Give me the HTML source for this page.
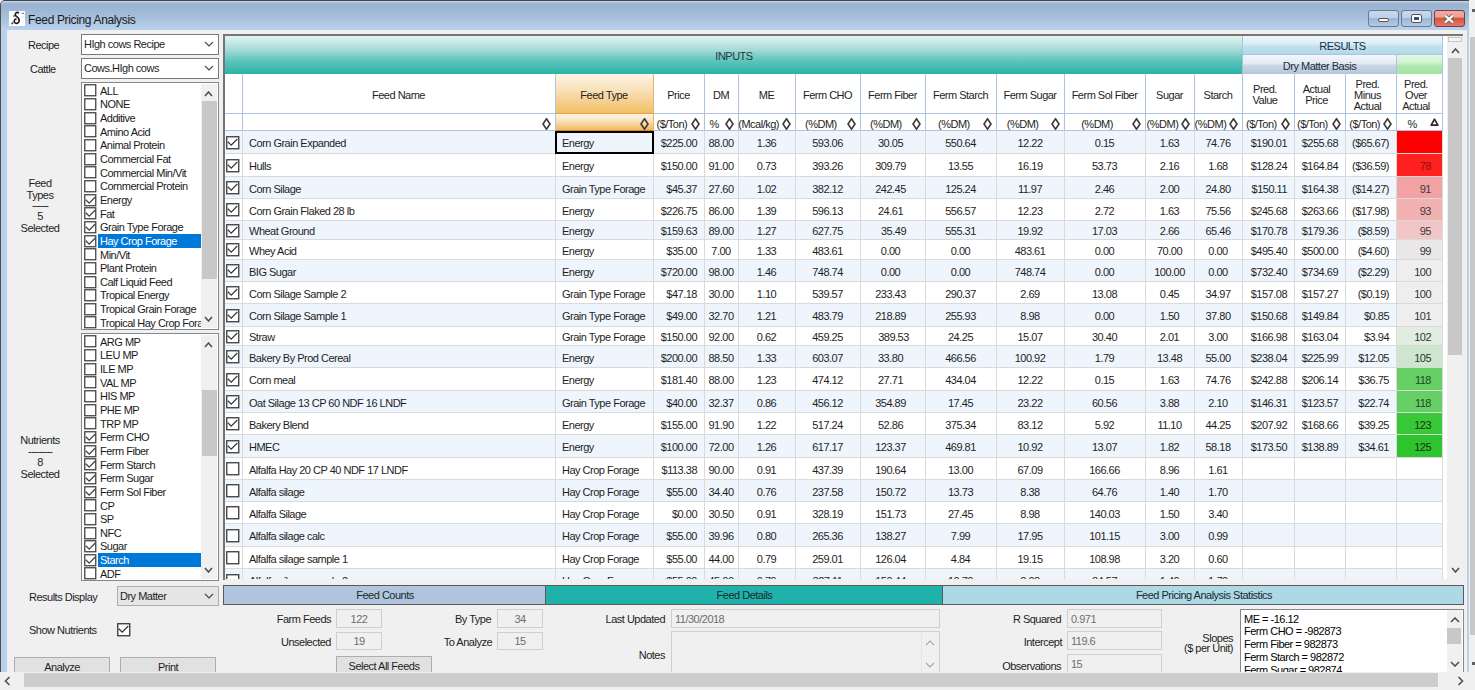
<!DOCTYPE html>
<html><head><meta charset="utf-8"><style>
html,body{margin:0;padding:0;width:1475px;height:690px;overflow:hidden;background:#f0f0f0;position:relative;font-family:"Liberation Sans", sans-serif}
.t{position:absolute;font-family:"Liberation Sans", sans-serif;font-size:11px;letter-spacing:-0.5px;line-height:14px;white-space:nowrap;color:#1e1e1e}
</style></head><body>
<div style="position:absolute;left:1469px;top:0px;width:6px;height:690px;background:#f0f0f0"></div><div style="position:absolute;left:1470px;top:37px;width:5px;height:598px;background:#c8c8c8"></div><div style="position:absolute;left:1472px;top:9px;width:3px;height:3px;background:#606060"></div><div style="position:absolute;left:1472px;top:662px;width:3px;height:3px;background:#606060"></div><div style="position:absolute;left:0px;top:0px;width:1469px;height:672px;background:#b9d1ea;border-top:1px solid #474747;border-left:1px solid #505050;box-sizing:border-box;border-top-left-radius:5px"></div><div style="position:absolute;left:1px;top:1px;width:1468px;height:29px;background:linear-gradient(#c6d6ea 0px,#98b2d1 3px,#a3bcda 14px,#bad2ed 29px);border-top-left-radius:4px"></div><div style="position:absolute;left:1467px;top:30px;width:2px;height:642px;background:#b9d1ea"></div><div style="position:absolute;left:9px;top:10.5px;width:16px;height:15.5px;background:#fff"><svg width="16" height="16" style="position:absolute;left:0;top:0"><path d="M10 2.2 C7.5 0.2,4.8 3.2,7.2 5.2 C9.8 7,11.2 8.8,9.6 11.2 C8 13.2,5.2 12.6,5.2 10 C5.2 8.8,6.2 8,7.5 8.2" fill="none" stroke="#1a1a1a" stroke-width="1.6"/><path d="M4.2 5.2 L6.2 4.6" stroke="#333" stroke-width="1.2"/><path d="M2.4 13.2 L4.3 11.4" stroke="#2a6a6a" stroke-width="1.6"/><path d="M12.8 1.5 L13.6 3.2 M14.4 1.8 L14.6 3" stroke="#4a7a8a" stroke-width="0.9"/></svg></div><div class="t" style="left:28px;top:11.5px;font-size:12px;letter-spacing:-0.35px;color:#1a1a1a;line-height:16px">Feed Pricing Analysis</div><div style="position:absolute;left:1368px;top:10px;width:31px;height:17px;box-sizing:border-box;border:1px solid #6b7a90;border-radius:3px;background:linear-gradient(#c8daf0 0%,#bcd0ea 45%,#9cb6d4 50%,#b4cae4 100%)"><div style="position:absolute;left:9px;top:7px;width:11px;height:4px;background:#fff;border:1px solid #555;border-radius:2px;box-sizing:border-box"></div></div><div style="position:absolute;left:1401px;top:10px;width:31px;height:17px;box-sizing:border-box;border:1px solid #6b7a90;border-radius:3px;background:linear-gradient(#c8daf0 0%,#bcd0ea 45%,#9cb6d4 50%,#b4cae4 100%)"><div style="position:absolute;left:9px;top:3px;width:11px;height:9px;background:#fff;border:1px solid #555;border-radius:2px;box-sizing:border-box"><div style="position:absolute;left:2px;top:2px;width:5px;height:3px;background:#3a4a70"></div></div></div><div style="position:absolute;left:1434px;top:10px;width:31px;height:17px;box-sizing:border-box;border:1px solid #6e4040;border-radius:3px;background:linear-gradient(#f6aaa6 0%,#f09c96 40%,#c8602c 50%,#c8602c 56%,#e05a4c 60%,#e87468 100%)"><svg style="position:absolute;left:7px;top:2px" width="14" height="12"><path d="M3 2.5 L11 9.5 M11 2.5 L3 9.5" stroke="#666" stroke-width="3.8"/><path d="M3 2.5 L11 9.5 M11 2.5 L3 9.5" stroke="#fff" stroke-width="2.2"/></svg></div><div style="position:absolute;left:7px;top:30px;width:1460px;height:642px;background:#f0f0f0"></div><div class="t" style="left:28px;top:38px;">Recipe</div><div class="t" style="left:30px;top:62px;">Cattle</div><div style="position:absolute;left:81px;top:34px;width:138px;height:21px;box-sizing:border-box;border:1px solid #7a7a7a;background:#fff"><div class="t" style="left:2px;top:2px">HIgh cows Recipe</div><svg style="position:absolute;left:122px;top:6px" width="10" height="6"><path d="M1 1 L5.0 5 L9 1" fill="none" stroke="#444" stroke-width="1.1"/></svg></div><div style="position:absolute;left:81px;top:58px;width:138px;height:21px;box-sizing:border-box;border:1px solid #7a7a7a;background:#fff"><div class="t" style="left:2px;top:2px">Cows.HIgh cows</div><svg style="position:absolute;left:122px;top:6px" width="10" height="6"><path d="M1 1 L5.0 5 L9 1" fill="none" stroke="#444" stroke-width="1.1"/></svg></div><div style="position:absolute;left:81px;top:82px;width:138px;height:248px;box-sizing:border-box;border:1px solid #828790;background:#fff;overflow:hidden"><svg style="position:absolute;left:2px;top:1.4px" width="13" height="13"><rect x="0.75" y="0.75" width="11" height="11" fill="#fff" stroke="#444" stroke-width="1.3"/></svg><div class="t" style="left:18px;top:0.70px;color:#1a1a1a;width:101px;overflow:hidden">ALL</div><svg style="position:absolute;left:2px;top:15.05px" width="13" height="13"><rect x="0.75" y="0.75" width="11" height="11" fill="#fff" stroke="#444" stroke-width="1.3"/></svg><div class="t" style="left:18px;top:14.35px;color:#1a1a1a;width:101px;overflow:hidden">NONE</div><svg style="position:absolute;left:2px;top:28.7px" width="13" height="13"><rect x="0.75" y="0.75" width="11" height="11" fill="#fff" stroke="#444" stroke-width="1.3"/></svg><div class="t" style="left:18px;top:28.00px;color:#1a1a1a;width:101px;overflow:hidden">Additive</div><svg style="position:absolute;left:2px;top:42.35px" width="13" height="13"><rect x="0.75" y="0.75" width="11" height="11" fill="#fff" stroke="#444" stroke-width="1.3"/></svg><div class="t" style="left:18px;top:41.65px;color:#1a1a1a;width:101px;overflow:hidden">Amino Acid</div><svg style="position:absolute;left:2px;top:56.0px" width="13" height="13"><rect x="0.75" y="0.75" width="11" height="11" fill="#fff" stroke="#444" stroke-width="1.3"/></svg><div class="t" style="left:18px;top:55.30px;color:#1a1a1a;width:101px;overflow:hidden">Animal Protein</div><svg style="position:absolute;left:2px;top:69.65px" width="13" height="13"><rect x="0.75" y="0.75" width="11" height="11" fill="#fff" stroke="#444" stroke-width="1.3"/></svg><div class="t" style="left:18px;top:68.95px;color:#1a1a1a;width:101px;overflow:hidden">Commercial Fat</div><svg style="position:absolute;left:2px;top:83.30000000000001px" width="13" height="13"><rect x="0.75" y="0.75" width="11" height="11" fill="#fff" stroke="#444" stroke-width="1.3"/></svg><div class="t" style="left:18px;top:82.60px;color:#1a1a1a;width:101px;overflow:hidden">Commercial Min/Vit</div><svg style="position:absolute;left:2px;top:96.95px" width="13" height="13"><rect x="0.75" y="0.75" width="11" height="11" fill="#fff" stroke="#444" stroke-width="1.3"/></svg><div class="t" style="left:18px;top:96.25px;color:#1a1a1a;width:101px;overflow:hidden">Commercial Protein</div><svg style="position:absolute;left:2px;top:110.60000000000001px" width="13" height="13"><rect x="0.75" y="0.75" width="11" height="11" fill="#fff" stroke="#444" stroke-width="1.3"/><path d="M1.8 5.8 L5.2 9.2 L11.3 3" fill="none" stroke="#444" stroke-width="1.3"/></svg><div class="t" style="left:18px;top:109.90px;color:#1a1a1a;width:101px;overflow:hidden">Energy</div><svg style="position:absolute;left:2px;top:124.25000000000001px" width="13" height="13"><rect x="0.75" y="0.75" width="11" height="11" fill="#fff" stroke="#444" stroke-width="1.3"/><path d="M1.8 5.8 L5.2 9.2 L11.3 3" fill="none" stroke="#444" stroke-width="1.3"/></svg><div class="t" style="left:18px;top:123.55px;color:#1a1a1a;width:101px;overflow:hidden">Fat</div><svg style="position:absolute;left:2px;top:137.9px" width="13" height="13"><rect x="0.75" y="0.75" width="11" height="11" fill="#fff" stroke="#444" stroke-width="1.3"/><path d="M1.8 5.8 L5.2 9.2 L11.3 3" fill="none" stroke="#444" stroke-width="1.3"/></svg><div class="t" style="left:18px;top:137.20px;color:#1a1a1a;width:101px;overflow:hidden">Grain Type Forage</div><div style="position:absolute;left:16px;top:150.75px;width:103px;height:14px;background:#0078d7"></div><svg style="position:absolute;left:2px;top:151.55px" width="13" height="13"><rect x="0.75" y="0.75" width="11" height="11" fill="#fff" stroke="#444" stroke-width="1.3"/><path d="M1.8 5.8 L5.2 9.2 L11.3 3" fill="none" stroke="#444" stroke-width="1.3"/></svg><div class="t" style="left:18px;top:150.85px;color:#fff;width:101px;overflow:hidden">Hay Crop Forage</div><svg style="position:absolute;left:2px;top:165.20000000000002px" width="13" height="13"><rect x="0.75" y="0.75" width="11" height="11" fill="#fff" stroke="#444" stroke-width="1.3"/></svg><div class="t" style="left:18px;top:164.50px;color:#1a1a1a;width:101px;overflow:hidden">Min/Vit</div><svg style="position:absolute;left:2px;top:178.85000000000002px" width="13" height="13"><rect x="0.75" y="0.75" width="11" height="11" fill="#fff" stroke="#444" stroke-width="1.3"/></svg><div class="t" style="left:18px;top:178.15px;color:#1a1a1a;width:101px;overflow:hidden">Plant Protein</div><svg style="position:absolute;left:2px;top:192.5px" width="13" height="13"><rect x="0.75" y="0.75" width="11" height="11" fill="#fff" stroke="#444" stroke-width="1.3"/></svg><div class="t" style="left:18px;top:191.80px;color:#1a1a1a;width:101px;overflow:hidden">Calf Liquid Feed</div><svg style="position:absolute;left:2px;top:206.15px" width="13" height="13"><rect x="0.75" y="0.75" width="11" height="11" fill="#fff" stroke="#444" stroke-width="1.3"/></svg><div class="t" style="left:18px;top:205.45px;color:#1a1a1a;width:101px;overflow:hidden">Tropical Energy</div><svg style="position:absolute;left:2px;top:219.8px" width="13" height="13"><rect x="0.75" y="0.75" width="11" height="11" fill="#fff" stroke="#444" stroke-width="1.3"/></svg><div class="t" style="left:18px;top:219.10px;color:#1a1a1a;width:101px;overflow:hidden">Tropical Grain Forage</div><svg style="position:absolute;left:2px;top:233.45000000000002px" width="13" height="13"><rect x="0.75" y="0.75" width="11" height="11" fill="#fff" stroke="#444" stroke-width="1.3"/></svg><div class="t" style="left:18px;top:232.75px;color:#1a1a1a;width:101px;overflow:hidden">Tropical Hay Crop Forage</div><div style="position:absolute;left:119px;top:1px;width:16px;height:244px;background:#f0f0f0"></div><svg style="position:absolute;left:122px;top:7.5px" width="9" height="6"><path d="M1 5 L4.5 1 L8 5" fill="none" stroke="#505050" stroke-width="1.6"/></svg><svg style="position:absolute;left:122px;top:233px" width="9" height="6"><path d="M1 1 L4.5 5 L8 1" fill="none" stroke="#505050" stroke-width="1.6"/></svg><div style="position:absolute;left:120px;top:18px;width:15px;height:178px;background:#c8c8c8"></div></div><div style="position:absolute;left:81px;top:333px;width:138px;height:248px;box-sizing:border-box;border:1px solid #828790;background:#fff;overflow:hidden"><svg style="position:absolute;left:2px;top:1.4px" width="13" height="13"><rect x="0.75" y="0.75" width="11" height="11" fill="#fff" stroke="#444" stroke-width="1.3"/></svg><div class="t" style="left:18px;top:0.70px;color:#1a1a1a;width:101px;overflow:hidden">ARG MP</div><svg style="position:absolute;left:2px;top:15.05px" width="13" height="13"><rect x="0.75" y="0.75" width="11" height="11" fill="#fff" stroke="#444" stroke-width="1.3"/></svg><div class="t" style="left:18px;top:14.35px;color:#1a1a1a;width:101px;overflow:hidden">LEU MP</div><svg style="position:absolute;left:2px;top:28.7px" width="13" height="13"><rect x="0.75" y="0.75" width="11" height="11" fill="#fff" stroke="#444" stroke-width="1.3"/></svg><div class="t" style="left:18px;top:28.00px;color:#1a1a1a;width:101px;overflow:hidden">ILE MP</div><svg style="position:absolute;left:2px;top:42.35px" width="13" height="13"><rect x="0.75" y="0.75" width="11" height="11" fill="#fff" stroke="#444" stroke-width="1.3"/></svg><div class="t" style="left:18px;top:41.65px;color:#1a1a1a;width:101px;overflow:hidden">VAL MP</div><svg style="position:absolute;left:2px;top:56.0px" width="13" height="13"><rect x="0.75" y="0.75" width="11" height="11" fill="#fff" stroke="#444" stroke-width="1.3"/></svg><div class="t" style="left:18px;top:55.30px;color:#1a1a1a;width:101px;overflow:hidden">HIS MP</div><svg style="position:absolute;left:2px;top:69.65px" width="13" height="13"><rect x="0.75" y="0.75" width="11" height="11" fill="#fff" stroke="#444" stroke-width="1.3"/></svg><div class="t" style="left:18px;top:68.95px;color:#1a1a1a;width:101px;overflow:hidden">PHE MP</div><svg style="position:absolute;left:2px;top:83.30000000000001px" width="13" height="13"><rect x="0.75" y="0.75" width="11" height="11" fill="#fff" stroke="#444" stroke-width="1.3"/></svg><div class="t" style="left:18px;top:82.60px;color:#1a1a1a;width:101px;overflow:hidden">TRP MP</div><svg style="position:absolute;left:2px;top:96.95px" width="13" height="13"><rect x="0.75" y="0.75" width="11" height="11" fill="#fff" stroke="#444" stroke-width="1.3"/><path d="M1.8 5.8 L5.2 9.2 L11.3 3" fill="none" stroke="#444" stroke-width="1.3"/></svg><div class="t" style="left:18px;top:96.25px;color:#1a1a1a;width:101px;overflow:hidden">Ferm CHO</div><svg style="position:absolute;left:2px;top:110.60000000000001px" width="13" height="13"><rect x="0.75" y="0.75" width="11" height="11" fill="#fff" stroke="#444" stroke-width="1.3"/><path d="M1.8 5.8 L5.2 9.2 L11.3 3" fill="none" stroke="#444" stroke-width="1.3"/></svg><div class="t" style="left:18px;top:109.90px;color:#1a1a1a;width:101px;overflow:hidden">Ferm Fiber</div><svg style="position:absolute;left:2px;top:124.25000000000001px" width="13" height="13"><rect x="0.75" y="0.75" width="11" height="11" fill="#fff" stroke="#444" stroke-width="1.3"/><path d="M1.8 5.8 L5.2 9.2 L11.3 3" fill="none" stroke="#444" stroke-width="1.3"/></svg><div class="t" style="left:18px;top:123.55px;color:#1a1a1a;width:101px;overflow:hidden">Ferm Starch</div><svg style="position:absolute;left:2px;top:137.9px" width="13" height="13"><rect x="0.75" y="0.75" width="11" height="11" fill="#fff" stroke="#444" stroke-width="1.3"/><path d="M1.8 5.8 L5.2 9.2 L11.3 3" fill="none" stroke="#444" stroke-width="1.3"/></svg><div class="t" style="left:18px;top:137.20px;color:#1a1a1a;width:101px;overflow:hidden">Ferm Sugar</div><svg style="position:absolute;left:2px;top:151.55px" width="13" height="13"><rect x="0.75" y="0.75" width="11" height="11" fill="#fff" stroke="#444" stroke-width="1.3"/><path d="M1.8 5.8 L5.2 9.2 L11.3 3" fill="none" stroke="#444" stroke-width="1.3"/></svg><div class="t" style="left:18px;top:150.85px;color:#1a1a1a;width:101px;overflow:hidden">Ferm Sol Fiber</div><svg style="position:absolute;left:2px;top:165.20000000000002px" width="13" height="13"><rect x="0.75" y="0.75" width="11" height="11" fill="#fff" stroke="#444" stroke-width="1.3"/></svg><div class="t" style="left:18px;top:164.50px;color:#1a1a1a;width:101px;overflow:hidden">CP</div><svg style="position:absolute;left:2px;top:178.85000000000002px" width="13" height="13"><rect x="0.75" y="0.75" width="11" height="11" fill="#fff" stroke="#444" stroke-width="1.3"/></svg><div class="t" style="left:18px;top:178.15px;color:#1a1a1a;width:101px;overflow:hidden">SP</div><svg style="position:absolute;left:2px;top:192.5px" width="13" height="13"><rect x="0.75" y="0.75" width="11" height="11" fill="#fff" stroke="#444" stroke-width="1.3"/></svg><div class="t" style="left:18px;top:191.80px;color:#1a1a1a;width:101px;overflow:hidden">NFC</div><svg style="position:absolute;left:2px;top:206.15px" width="13" height="13"><rect x="0.75" y="0.75" width="11" height="11" fill="#fff" stroke="#444" stroke-width="1.3"/><path d="M1.8 5.8 L5.2 9.2 L11.3 3" fill="none" stroke="#444" stroke-width="1.3"/></svg><div class="t" style="left:18px;top:205.45px;color:#1a1a1a;width:101px;overflow:hidden">Sugar</div><div style="position:absolute;left:16px;top:219.00px;width:103px;height:14px;background:#0078d7"></div><svg style="position:absolute;left:2px;top:219.8px" width="13" height="13"><rect x="0.75" y="0.75" width="11" height="11" fill="#fff" stroke="#444" stroke-width="1.3"/><path d="M1.8 5.8 L5.2 9.2 L11.3 3" fill="none" stroke="#444" stroke-width="1.3"/></svg><div class="t" style="left:18px;top:219.10px;color:#fff;width:101px;overflow:hidden">Starch</div><svg style="position:absolute;left:2px;top:233.45000000000002px" width="13" height="13"><rect x="0.75" y="0.75" width="11" height="11" fill="#fff" stroke="#444" stroke-width="1.3"/></svg><div class="t" style="left:18px;top:232.75px;color:#1a1a1a;width:101px;overflow:hidden">ADF</div><div style="position:absolute;left:119px;top:1px;width:16px;height:244px;background:#f0f0f0"></div><svg style="position:absolute;left:122px;top:7.5px" width="9" height="6"><path d="M1 5 L4.5 1 L8 5" fill="none" stroke="#505050" stroke-width="1.6"/></svg><svg style="position:absolute;left:122px;top:233px" width="9" height="6"><path d="M1 1 L4.5 5 L8 1" fill="none" stroke="#505050" stroke-width="1.6"/></svg><div style="position:absolute;left:120px;top:56px;width:15px;height:66px;background:#c8c8c8"></div></div><div class="t" style="left:-10px;top:176px;width:100px;text-align:center;">Feed</div><div class="t" style="left:-10px;top:188px;width:100px;text-align:center;">Types</div><div class="t" style="left:-10px;top:198px;width:100px;text-align:center;letter-spacing:-1px">------</div><div class="t" style="left:-10px;top:209px;width:100px;text-align:center;">5</div><div class="t" style="left:-10px;top:221px;width:100px;text-align:center;">Selected</div><div class="t" style="left:-10px;top:433px;width:100px;text-align:center;">Nutrients</div><div class="t" style="left:-10px;top:444px;width:100px;text-align:center;letter-spacing:-1px">---------</div><div class="t" style="left:-10px;top:455px;width:100px;text-align:center;">8</div><div class="t" style="left:-10px;top:467px;width:100px;text-align:center;">Selected</div><div class="t" style="left:29px;top:589.5px;">Results Display</div><div style="position:absolute;left:117px;top:586px;width:102px;height:20px;box-sizing:border-box;border:1px solid #adadad;background:#e5e5e5"><div class="t" style="left:2px;top:2px">Dry Matter</div><svg style="position:absolute;left:86px;top:6px" width="10" height="6"><path d="M1 1 L5.0 5 L9 1" fill="none" stroke="#444" stroke-width="1.1"/></svg></div><div class="t" style="left:29px;top:622.5px;">Show Nutrients</div><svg style="position:absolute;left:117px;top:623px" width="14" height="14"><rect x="0.75" y="0.75" width="12" height="12" fill="#fff" stroke="#333" stroke-width="1.3"/><path d="M1.8 5.8 L5.2 9.2 L11.3 3" fill="none" stroke="#333" stroke-width="1.3"/></svg><div style="position:absolute;left:14px;top:657px;width:96px;height:20px;box-sizing:border-box;border:1px solid #adadad;background:#e1e1e1"><div class="t" style="left:0;top:2px;width:94px;text-align:center">Analyze</div></div><div style="position:absolute;left:120px;top:657px;width:96px;height:20px;box-sizing:border-box;border:1px solid #adadad;background:#e1e1e1"><div class="t" style="left:0;top:2px;width:94px;text-align:center">Print</div></div>
<div style="position:absolute;left:223px;top:34px;width:1240px;height:2px;background:#7a7676"></div><div style="position:absolute;left:223px;top:34px;width:2px;height:546px;background:#747474"></div><div style="position:absolute;left:225px;top:36px;width:1238px;height:544px;background:#fff"></div><div style="position:absolute;left:225px;top:36px;width:1018px;height:38px;background:linear-gradient(#e2f5f4 0%,#a6dcd7 35%,#5ec4bc 65%,#2bb3a9 100%)"></div><div class="t" style="left:225px;top:49px;width:1018px;text-align:center;color:#1e3a3a">INPUTS</div><div style="position:absolute;left:1243px;top:36px;width:199px;height:19px;background:linear-gradient(#eef7fb 0%,#d8edf5 45%,#c2e1ee 55%,#b2d9e9 100%);border-bottom:1px solid #a9c6de;box-sizing:border-box"></div><div class="t" style="left:1243px;top:39.3px;width:199px;text-align:center;color:#1e2e40">RESULTS</div><div style="position:absolute;left:1243px;top:55px;width:153px;height:19px;background:linear-gradient(#f4f7fa 0%,#e3eaf2 45%,#cad6e5 55%,#b6c7dc 100%)"></div><div class="t" style="left:1243px;top:59px;width:153px;text-align:center;color:#1e2e40">Dry Matter Basis</div><div style="position:absolute;left:1396px;top:55px;width:1px;height:19px;background:#aec3de"></div><div style="position:absolute;left:1442px;top:36px;width:1px;height:38px;background:#aec3de"></div><div style="position:absolute;left:1242px;top:36px;width:1px;height:38px;background:#9cc8d0"></div><div style="position:absolute;left:1397px;top:55px;width:45px;height:19px;background:linear-gradient(#e2f8e2 0%,#d2f3d2 40%,#b2e9b2 55%,#a4e2a4 100%)"></div><div style="position:absolute;left:225px;top:113px;width:1217px;height:1px;background:#aec3de"></div><div style="position:absolute;left:225px;top:130px;width:1217px;height:1px;background:#aec3de"></div><div style="position:absolute;left:242px;top:74px;width:1px;height:57px;background:#aec3de"></div><div style="position:absolute;left:555px;top:74px;width:1px;height:57px;background:#aec3de"></div><div style="position:absolute;left:653px;top:74px;width:1px;height:57px;background:#f0b060"></div><div style="position:absolute;left:704px;top:74px;width:1px;height:57px;background:#aec3de"></div><div style="position:absolute;left:738px;top:74px;width:1px;height:57px;background:#aec3de"></div><div style="position:absolute;left:795px;top:74px;width:1px;height:57px;background:#aec3de"></div><div style="position:absolute;left:860px;top:74px;width:1px;height:57px;background:#aec3de"></div><div style="position:absolute;left:925px;top:74px;width:1px;height:57px;background:#aec3de"></div><div style="position:absolute;left:996px;top:74px;width:1px;height:57px;background:#aec3de"></div><div style="position:absolute;left:1064px;top:74px;width:1px;height:57px;background:#aec3de"></div><div style="position:absolute;left:1145px;top:74px;width:1px;height:57px;background:#aec3de"></div><div style="position:absolute;left:1194px;top:74px;width:1px;height:57px;background:#aec3de"></div><div style="position:absolute;left:1242px;top:74px;width:1px;height:57px;background:#aec3de"></div><div style="position:absolute;left:1294px;top:74px;width:1px;height:57px;background:#aec3de"></div><div style="position:absolute;left:1345px;top:74px;width:1px;height:57px;background:#aec3de"></div><div style="position:absolute;left:1396px;top:74px;width:1px;height:57px;background:#aec3de"></div><div style="position:absolute;left:1442px;top:74px;width:1px;height:57px;background:#aec3de"></div><div style="position:absolute;left:556px;top:74px;width:97px;height:40px;background:linear-gradient(#fdf4e6 0%,#fae4c0 35%,#f6d298 65%,#f2c062 100%);border-bottom:1px solid #eda04a;box-sizing:border-box"></div><div style="position:absolute;left:556px;top:114px;width:97px;height:17px;background:linear-gradient(#fef6ea 0%,#fae2b8 45%,#f5cc86 75%,#f2b95a 100%);border-bottom:1px solid #d9802a;box-sizing:border-box"></div><div class="t" style="left:242px;top:89.5px;width:313px;text-align:center;line-height:11px">Feed Name</div><div class="t" style="left:555px;top:89.5px;width:98px;text-align:center;line-height:11px">Feed Type</div><div class="t" style="left:653px;top:89.5px;width:51px;text-align:center;line-height:11px">Price</div><div class="t" style="left:704px;top:89.5px;width:34px;text-align:center;line-height:11px">DM</div><div class="t" style="left:738px;top:89.5px;width:57px;text-align:center;line-height:11px">ME</div><div class="t" style="left:795px;top:89.5px;width:65px;text-align:center;line-height:11px">Ferm CHO</div><div class="t" style="left:860px;top:89.5px;width:65px;text-align:center;line-height:11px">Ferm Fiber</div><div class="t" style="left:925px;top:89.5px;width:71px;text-align:center;line-height:11px">Ferm Starch</div><div class="t" style="left:996px;top:89.5px;width:68px;text-align:center;line-height:11px">Ferm Sugar</div><div class="t" style="left:1064px;top:89.5px;width:81px;text-align:center;line-height:11px">Ferm Sol Fiber</div><div class="t" style="left:1145px;top:89.5px;width:49px;text-align:center;line-height:11px">Sugar</div><div class="t" style="left:1194px;top:89.5px;width:48px;text-align:center;line-height:11px">Starch</div><div class="t" style="left:1239px;top:84.0px;width:52px;text-align:center;line-height:11px">Pred.<br>Value</div><div class="t" style="left:1291px;top:84.0px;width:51px;text-align:center;line-height:11px">Actual<br>Price</div><div class="t" style="left:1342px;top:78.5px;width:51px;text-align:center;line-height:11px">Pred.<br>Minus<br>Actual</div><div class="t" style="left:1393px;top:78.5px;width:46px;text-align:center;line-height:11px">Pred.<br>Over<br>Actual</div><svg style="position:absolute;left:542px;top:118px" width="9" height="12"><path d="M4.5 0.8 L8 6 L4.5 11.2 L1 6 Z" fill="none" stroke="#3a3a3a" stroke-width="1.6"/></svg><svg style="position:absolute;left:640px;top:118px" width="9" height="12"><path d="M4.5 0.8 L8 6 L4.5 11.2 L1 6 Z" fill="none" stroke="#3a3a3a" stroke-width="1.6"/></svg><svg style="position:absolute;left:691px;top:118px" width="9" height="12"><path d="M4.5 0.8 L8 6 L4.5 11.2 L1 6 Z" fill="none" stroke="#3a3a3a" stroke-width="1.6"/></svg><div class="t" style="left:656.5px;top:117px">($/Ton)</div><svg style="position:absolute;left:725px;top:118px" width="9" height="12"><path d="M4.5 0.8 L8 6 L4.5 11.2 L1 6 Z" fill="none" stroke="#3a3a3a" stroke-width="1.6"/></svg><div class="t" style="left:709.5px;top:117px">%</div><svg style="position:absolute;left:782px;top:118px" width="9" height="12"><path d="M4.5 0.8 L8 6 L4.5 11.2 L1 6 Z" fill="none" stroke="#3a3a3a" stroke-width="1.6"/></svg><div class="t" style="left:738.3px;top:117px">(Mcal/kg)</div><svg style="position:absolute;left:847px;top:118px" width="9" height="12"><path d="M4.5 0.8 L8 6 L4.5 11.2 L1 6 Z" fill="none" stroke="#3a3a3a" stroke-width="1.6"/></svg><div class="t" style="left:805px;top:117px">(%DM)</div><svg style="position:absolute;left:912px;top:118px" width="9" height="12"><path d="M4.5 0.8 L8 6 L4.5 11.2 L1 6 Z" fill="none" stroke="#3a3a3a" stroke-width="1.6"/></svg><div class="t" style="left:870px;top:117px">(%DM)</div><svg style="position:absolute;left:983px;top:118px" width="9" height="12"><path d="M4.5 0.8 L8 6 L4.5 11.2 L1 6 Z" fill="none" stroke="#3a3a3a" stroke-width="1.6"/></svg><div class="t" style="left:938px;top:117px">(%DM)</div><svg style="position:absolute;left:1051px;top:118px" width="9" height="12"><path d="M4.5 0.8 L8 6 L4.5 11.2 L1 6 Z" fill="none" stroke="#3a3a3a" stroke-width="1.6"/></svg><div class="t" style="left:1006.8px;top:117px">(%DM)</div><svg style="position:absolute;left:1132px;top:118px" width="9" height="12"><path d="M4.5 0.8 L8 6 L4.5 11.2 L1 6 Z" fill="none" stroke="#3a3a3a" stroke-width="1.6"/></svg><div class="t" style="left:1081.2px;top:117px">(%DM)</div><svg style="position:absolute;left:1181px;top:118px" width="9" height="12"><path d="M4.5 0.8 L8 6 L4.5 11.2 L1 6 Z" fill="none" stroke="#3a3a3a" stroke-width="1.6"/></svg><div class="t" style="left:1146.6px;top:117px">(%DM)</div><svg style="position:absolute;left:1229px;top:118px" width="9" height="12"><path d="M4.5 0.8 L8 6 L4.5 11.2 L1 6 Z" fill="none" stroke="#3a3a3a" stroke-width="1.6"/></svg><div class="t" style="left:1194.6px;top:117px">(%DM)</div><svg style="position:absolute;left:1281px;top:118px" width="9" height="12"><path d="M4.5 0.8 L8 6 L4.5 11.2 L1 6 Z" fill="none" stroke="#3a3a3a" stroke-width="1.6"/></svg><div class="t" style="left:1246px;top:117px">($/Ton)</div><svg style="position:absolute;left:1332px;top:118px" width="9" height="12"><path d="M4.5 0.8 L8 6 L4.5 11.2 L1 6 Z" fill="none" stroke="#3a3a3a" stroke-width="1.6"/></svg><div class="t" style="left:1297px;top:117px">($/Ton)</div><svg style="position:absolute;left:1383px;top:118px" width="9" height="12"><path d="M4.5 0.8 L8 6 L4.5 11.2 L1 6 Z" fill="none" stroke="#3a3a3a" stroke-width="1.6"/></svg><div class="t" style="left:1349.3px;top:117px">($/Ton)</div><div class="t" style="left:1407.5px;top:117px">%</div><svg style="position:absolute;left:1429.5px;top:118px" width="10" height="9"><path d="M4.5 1.2 L7.8 7.2 L1.2 7.2 Z" fill="none" stroke="#2a2a2a" stroke-width="1.7" stroke-linejoin="round"/></svg>
<div style="position:absolute;left:225px;top:131px;width:1217px;height:23px;background:#eef5fc"></div><div style="position:absolute;left:225px;top:153px;width:1217px;height:1px;background:#dadada"></div><svg style="position:absolute;left:226.3px;top:135.7px" width="14" height="14"><rect x="0.75" y="0.75" width="12" height="12" fill="#fff" stroke="#3a3a3a" stroke-width="1.3"/><path d="M1.8 5.8 L5.2 9.2 L11.3 3" fill="none" stroke="#3a3a3a" stroke-width="1.3"/></svg><div class="t" style="left:249px;top:136.2px">Corn Grain Expanded</div><div class="t" style="left:562px;top:136.2px">Energy</div><div class="t" style="left:653px;top:136.2px;width:44px;text-align:right">$225.00</div><div class="t" style="left:704px;top:136.2px;width:34px;text-align:center">88.00</div><div class="t" style="left:738px;top:136.2px;width:57px;text-align:center">1.36</div><div class="t" style="left:795px;top:136.2px;width:65px;text-align:center">593.06</div><div class="t" style="left:858px;top:136.2px;width:65px;text-align:center">30.05</div><div class="t" style="left:925px;top:136.2px;width:71px;text-align:center">550.64</div><div class="t" style="left:996px;top:136.2px;width:68px;text-align:center">12.22</div><div class="t" style="left:1064px;top:136.2px;width:81px;text-align:center">0.15</div><div class="t" style="left:1145px;top:136.2px;width:49px;text-align:center">1.63</div><div class="t" style="left:1194px;top:136.2px;width:48px;text-align:center">74.76</div><div class="t" style="left:1242px;top:136.2px;width:45px;text-align:right">$190.01</div><div class="t" style="left:1294px;top:136.2px;width:44px;text-align:right">$255.68</div><div class="t" style="left:1345px;top:136.2px;width:44px;text-align:right">($65.67)</div><div style="position:absolute;left:1397px;top:131px;width:45px;height:22px;background:#ff0000"></div><div class="t" style="left:1396px;top:136.2px;width:35px;text-align:right;color:#f40000">74</div><div style="position:absolute;left:225px;top:154px;width:1217px;height:23px;background:#ffffff"></div><div style="position:absolute;left:225px;top:176px;width:1217px;height:1px;background:#dadada"></div><svg style="position:absolute;left:226.3px;top:158.7px" width="14" height="14"><rect x="0.75" y="0.75" width="12" height="12" fill="#fff" stroke="#3a3a3a" stroke-width="1.3"/><path d="M1.8 5.8 L5.2 9.2 L11.3 3" fill="none" stroke="#3a3a3a" stroke-width="1.3"/></svg><div class="t" style="left:249px;top:159.2px">Hulls</div><div class="t" style="left:562px;top:159.2px">Energy</div><div class="t" style="left:653px;top:159.2px;width:44px;text-align:right">$150.00</div><div class="t" style="left:704px;top:159.2px;width:34px;text-align:center">91.00</div><div class="t" style="left:738px;top:159.2px;width:57px;text-align:center">0.73</div><div class="t" style="left:795px;top:159.2px;width:65px;text-align:center">393.26</div><div class="t" style="left:858px;top:159.2px;width:65px;text-align:center">309.79</div><div class="t" style="left:925px;top:159.2px;width:71px;text-align:center">13.55</div><div class="t" style="left:996px;top:159.2px;width:68px;text-align:center">16.19</div><div class="t" style="left:1064px;top:159.2px;width:81px;text-align:center">53.73</div><div class="t" style="left:1145px;top:159.2px;width:49px;text-align:center">2.16</div><div class="t" style="left:1194px;top:159.2px;width:48px;text-align:center">1.68</div><div class="t" style="left:1242px;top:159.2px;width:45px;text-align:right">$128.24</div><div class="t" style="left:1294px;top:159.2px;width:44px;text-align:right">$164.84</div><div class="t" style="left:1345px;top:159.2px;width:44px;text-align:right">($36.59)</div><div style="position:absolute;left:1397px;top:154px;width:45px;height:22px;background:#ff2020"></div><div class="t" style="left:1396px;top:159.2px;width:35px;text-align:right;color:#861212">78</div><div style="position:absolute;left:225px;top:177px;width:1217px;height:22px;background:#eef5fc"></div><div style="position:absolute;left:225px;top:198px;width:1217px;height:1px;background:#dadada"></div><svg style="position:absolute;left:226.3px;top:181.2px" width="14" height="14"><rect x="0.75" y="0.75" width="12" height="12" fill="#fff" stroke="#3a3a3a" stroke-width="1.3"/><path d="M1.8 5.8 L5.2 9.2 L11.3 3" fill="none" stroke="#3a3a3a" stroke-width="1.3"/></svg><div class="t" style="left:249px;top:181.7px">Corn Silage</div><div class="t" style="left:562px;top:181.7px">Grain Type Forage</div><div class="t" style="left:653px;top:181.7px;width:44px;text-align:right">$45.37</div><div class="t" style="left:704px;top:181.7px;width:34px;text-align:center">27.60</div><div class="t" style="left:738px;top:181.7px;width:57px;text-align:center">1.02</div><div class="t" style="left:795px;top:181.7px;width:65px;text-align:center">382.12</div><div class="t" style="left:858px;top:181.7px;width:65px;text-align:center">242.45</div><div class="t" style="left:925px;top:181.7px;width:71px;text-align:center">125.24</div><div class="t" style="left:996px;top:181.7px;width:68px;text-align:center">11.97</div><div class="t" style="left:1064px;top:181.7px;width:81px;text-align:center">2.46</div><div class="t" style="left:1145px;top:181.7px;width:49px;text-align:center">2.00</div><div class="t" style="left:1194px;top:181.7px;width:48px;text-align:center">24.80</div><div class="t" style="left:1242px;top:181.7px;width:45px;text-align:right">$150.11</div><div class="t" style="left:1294px;top:181.7px;width:44px;text-align:right">$164.38</div><div class="t" style="left:1345px;top:181.7px;width:44px;text-align:right">($14.27)</div><div style="position:absolute;left:1397px;top:177px;width:45px;height:21px;background:#f2a2a2"></div><div class="t" style="left:1396px;top:181.7px;width:35px;text-align:right;color:#3a3a3a">91</div><div style="position:absolute;left:225px;top:199px;width:1217px;height:22px;background:#ffffff"></div><div style="position:absolute;left:225px;top:220px;width:1217px;height:1px;background:#dadada"></div><svg style="position:absolute;left:226.3px;top:203.2px" width="14" height="14"><rect x="0.75" y="0.75" width="12" height="12" fill="#fff" stroke="#3a3a3a" stroke-width="1.3"/><path d="M1.8 5.8 L5.2 9.2 L11.3 3" fill="none" stroke="#3a3a3a" stroke-width="1.3"/></svg><div class="t" style="left:249px;top:203.7px">Corn Grain Flaked 28 lb</div><div class="t" style="left:562px;top:203.7px">Energy</div><div class="t" style="left:653px;top:203.7px;width:44px;text-align:right">$226.75</div><div class="t" style="left:704px;top:203.7px;width:34px;text-align:center">86.00</div><div class="t" style="left:738px;top:203.7px;width:57px;text-align:center">1.39</div><div class="t" style="left:795px;top:203.7px;width:65px;text-align:center">596.13</div><div class="t" style="left:858px;top:203.7px;width:65px;text-align:center">24.61</div><div class="t" style="left:925px;top:203.7px;width:71px;text-align:center">556.57</div><div class="t" style="left:996px;top:203.7px;width:68px;text-align:center">12.23</div><div class="t" style="left:1064px;top:203.7px;width:81px;text-align:center">2.72</div><div class="t" style="left:1145px;top:203.7px;width:49px;text-align:center">1.63</div><div class="t" style="left:1194px;top:203.7px;width:48px;text-align:center">75.56</div><div class="t" style="left:1242px;top:203.7px;width:45px;text-align:right">$245.68</div><div class="t" style="left:1294px;top:203.7px;width:44px;text-align:right">$263.66</div><div class="t" style="left:1345px;top:203.7px;width:44px;text-align:right">($17.98)</div><div style="position:absolute;left:1397px;top:199px;width:45px;height:21px;background:#f2b2b2"></div><div class="t" style="left:1396px;top:203.7px;width:35px;text-align:right;color:#3a3a3a">93</div><div style="position:absolute;left:225px;top:221px;width:1217px;height:19px;background:#eef5fc"></div><div style="position:absolute;left:225px;top:239px;width:1217px;height:1px;background:#dadada"></div><svg style="position:absolute;left:226.3px;top:223.7px" width="14" height="14"><rect x="0.75" y="0.75" width="12" height="12" fill="#fff" stroke="#3a3a3a" stroke-width="1.3"/><path d="M1.8 5.8 L5.2 9.2 L11.3 3" fill="none" stroke="#3a3a3a" stroke-width="1.3"/></svg><div class="t" style="left:249px;top:224.2px">Wheat Ground</div><div class="t" style="left:562px;top:224.2px">Energy</div><div class="t" style="left:653px;top:224.2px;width:44px;text-align:right">$159.63</div><div class="t" style="left:704px;top:224.2px;width:34px;text-align:center">89.00</div><div class="t" style="left:738px;top:224.2px;width:57px;text-align:center">1.27</div><div class="t" style="left:795px;top:224.2px;width:65px;text-align:center">627.75</div><div class="t" style="left:861px;top:224.2px;width:65px;text-align:center">35.49</div><div class="t" style="left:925px;top:224.2px;width:71px;text-align:center">555.31</div><div class="t" style="left:996px;top:224.2px;width:68px;text-align:center">19.92</div><div class="t" style="left:1064px;top:224.2px;width:81px;text-align:center">17.03</div><div class="t" style="left:1145px;top:224.2px;width:49px;text-align:center">2.66</div><div class="t" style="left:1194px;top:224.2px;width:48px;text-align:center">65.46</div><div class="t" style="left:1242px;top:224.2px;width:45px;text-align:right">$170.78</div><div class="t" style="left:1294px;top:224.2px;width:44px;text-align:right">$179.36</div><div class="t" style="left:1345px;top:224.2px;width:44px;text-align:right">($8.59)</div><div style="position:absolute;left:1397px;top:221px;width:45px;height:18px;background:#f2c6c6"></div><div class="t" style="left:1396px;top:224.2px;width:35px;text-align:right;color:#3a3a3a">95</div><div style="position:absolute;left:225px;top:240px;width:1217px;height:20px;background:#ffffff"></div><div style="position:absolute;left:225px;top:259px;width:1217px;height:1px;background:#dadada"></div><svg style="position:absolute;left:226.3px;top:243.2px" width="14" height="14"><rect x="0.75" y="0.75" width="12" height="12" fill="#fff" stroke="#3a3a3a" stroke-width="1.3"/><path d="M1.8 5.8 L5.2 9.2 L11.3 3" fill="none" stroke="#3a3a3a" stroke-width="1.3"/></svg><div class="t" style="left:249px;top:243.7px">Whey Acid</div><div class="t" style="left:562px;top:243.7px">Energy</div><div class="t" style="left:653px;top:243.7px;width:44px;text-align:right">$35.00</div><div class="t" style="left:704px;top:243.7px;width:34px;text-align:center">7.00</div><div class="t" style="left:738px;top:243.7px;width:57px;text-align:center">1.33</div><div class="t" style="left:795px;top:243.7px;width:65px;text-align:center">483.61</div><div class="t" style="left:858px;top:243.7px;width:65px;text-align:center">0.00</div><div class="t" style="left:925px;top:243.7px;width:71px;text-align:center">0.00</div><div class="t" style="left:996px;top:243.7px;width:68px;text-align:center">483.61</div><div class="t" style="left:1064px;top:243.7px;width:81px;text-align:center">0.00</div><div class="t" style="left:1145px;top:243.7px;width:49px;text-align:center">70.00</div><div class="t" style="left:1194px;top:243.7px;width:48px;text-align:center">0.00</div><div class="t" style="left:1242px;top:243.7px;width:45px;text-align:right">$495.40</div><div class="t" style="left:1294px;top:243.7px;width:44px;text-align:right">$500.00</div><div class="t" style="left:1345px;top:243.7px;width:44px;text-align:right">($4.60)</div><div style="position:absolute;left:1397px;top:240px;width:45px;height:19px;background:#e9e7e7"></div><div class="t" style="left:1396px;top:243.7px;width:35px;text-align:right;color:#333">99</div><div style="position:absolute;left:225px;top:260px;width:1217px;height:22px;background:#eef5fc"></div><div style="position:absolute;left:225px;top:281px;width:1217px;height:1px;background:#dadada"></div><svg style="position:absolute;left:226.3px;top:264.2px" width="14" height="14"><rect x="0.75" y="0.75" width="12" height="12" fill="#fff" stroke="#3a3a3a" stroke-width="1.3"/><path d="M1.8 5.8 L5.2 9.2 L11.3 3" fill="none" stroke="#3a3a3a" stroke-width="1.3"/></svg><div class="t" style="left:249px;top:264.7px">BIG Sugar</div><div class="t" style="left:562px;top:264.7px">Energy</div><div class="t" style="left:653px;top:264.7px;width:44px;text-align:right">$720.00</div><div class="t" style="left:704px;top:264.7px;width:34px;text-align:center">98.00</div><div class="t" style="left:738px;top:264.7px;width:57px;text-align:center">1.46</div><div class="t" style="left:795px;top:264.7px;width:65px;text-align:center">748.74</div><div class="t" style="left:858px;top:264.7px;width:65px;text-align:center">0.00</div><div class="t" style="left:925px;top:264.7px;width:71px;text-align:center">0.00</div><div class="t" style="left:996px;top:264.7px;width:68px;text-align:center">748.74</div><div class="t" style="left:1064px;top:264.7px;width:81px;text-align:center">0.00</div><div class="t" style="left:1145px;top:264.7px;width:49px;text-align:center">100.00</div><div class="t" style="left:1194px;top:264.7px;width:48px;text-align:center">0.00</div><div class="t" style="left:1242px;top:264.7px;width:45px;text-align:right">$732.40</div><div class="t" style="left:1294px;top:264.7px;width:44px;text-align:right">$734.69</div><div class="t" style="left:1345px;top:264.7px;width:44px;text-align:right">($2.29)</div><div style="position:absolute;left:1397px;top:260px;width:45px;height:21px;background:#eeeeee"></div><div class="t" style="left:1396px;top:264.7px;width:35px;text-align:right;color:#333">100</div><div style="position:absolute;left:225px;top:282px;width:1217px;height:22px;background:#ffffff"></div><div style="position:absolute;left:225px;top:303px;width:1217px;height:1px;background:#dadada"></div><svg style="position:absolute;left:226.3px;top:286.2px" width="14" height="14"><rect x="0.75" y="0.75" width="12" height="12" fill="#fff" stroke="#3a3a3a" stroke-width="1.3"/><path d="M1.8 5.8 L5.2 9.2 L11.3 3" fill="none" stroke="#3a3a3a" stroke-width="1.3"/></svg><div class="t" style="left:249px;top:286.7px">Corn Silage Sample 2</div><div class="t" style="left:562px;top:286.7px">Grain Type Forage</div><div class="t" style="left:653px;top:286.7px;width:44px;text-align:right">$47.18</div><div class="t" style="left:704px;top:286.7px;width:34px;text-align:center">30.00</div><div class="t" style="left:738px;top:286.7px;width:57px;text-align:center">1.10</div><div class="t" style="left:795px;top:286.7px;width:65px;text-align:center">539.57</div><div class="t" style="left:858px;top:286.7px;width:65px;text-align:center">233.43</div><div class="t" style="left:925px;top:286.7px;width:71px;text-align:center">290.37</div><div class="t" style="left:996px;top:286.7px;width:68px;text-align:center">2.69</div><div class="t" style="left:1064px;top:286.7px;width:81px;text-align:center">13.08</div><div class="t" style="left:1145px;top:286.7px;width:49px;text-align:center">0.45</div><div class="t" style="left:1194px;top:286.7px;width:48px;text-align:center">34.97</div><div class="t" style="left:1242px;top:286.7px;width:45px;text-align:right">$157.08</div><div class="t" style="left:1294px;top:286.7px;width:44px;text-align:right">$157.27</div><div class="t" style="left:1345px;top:286.7px;width:44px;text-align:right">($0.19)</div><div style="position:absolute;left:1397px;top:282px;width:45px;height:21px;background:#eeeeee"></div><div class="t" style="left:1396px;top:286.7px;width:35px;text-align:right;color:#333">100</div><div style="position:absolute;left:225px;top:304px;width:1217px;height:23px;background:#eef5fc"></div><div style="position:absolute;left:225px;top:326px;width:1217px;height:1px;background:#dadada"></div><svg style="position:absolute;left:226.3px;top:308.7px" width="14" height="14"><rect x="0.75" y="0.75" width="12" height="12" fill="#fff" stroke="#3a3a3a" stroke-width="1.3"/><path d="M1.8 5.8 L5.2 9.2 L11.3 3" fill="none" stroke="#3a3a3a" stroke-width="1.3"/></svg><div class="t" style="left:249px;top:309.2px">Corn Silage Sample 1</div><div class="t" style="left:562px;top:309.2px">Grain Type Forage</div><div class="t" style="left:653px;top:309.2px;width:44px;text-align:right">$49.00</div><div class="t" style="left:704px;top:309.2px;width:34px;text-align:center">32.70</div><div class="t" style="left:738px;top:309.2px;width:57px;text-align:center">1.21</div><div class="t" style="left:795px;top:309.2px;width:65px;text-align:center">483.79</div><div class="t" style="left:858px;top:309.2px;width:65px;text-align:center">218.89</div><div class="t" style="left:925px;top:309.2px;width:71px;text-align:center">255.93</div><div class="t" style="left:996px;top:309.2px;width:68px;text-align:center">8.98</div><div class="t" style="left:1064px;top:309.2px;width:81px;text-align:center">0.00</div><div class="t" style="left:1145px;top:309.2px;width:49px;text-align:center">1.50</div><div class="t" style="left:1194px;top:309.2px;width:48px;text-align:center">37.80</div><div class="t" style="left:1242px;top:309.2px;width:45px;text-align:right">$150.68</div><div class="t" style="left:1294px;top:309.2px;width:44px;text-align:right">$149.84</div><div class="t" style="left:1345px;top:309.2px;width:44px;text-align:right">$0.85</div><div style="position:absolute;left:1397px;top:304px;width:45px;height:22px;background:#eeeeee"></div><div class="t" style="left:1396px;top:309.2px;width:35px;text-align:right;color:#333">101</div><div style="position:absolute;left:225px;top:327px;width:1217px;height:19px;background:#ffffff"></div><div style="position:absolute;left:225px;top:345px;width:1217px;height:1px;background:#dadada"></div><svg style="position:absolute;left:226.3px;top:329.7px" width="14" height="14"><rect x="0.75" y="0.75" width="12" height="12" fill="#fff" stroke="#3a3a3a" stroke-width="1.3"/><path d="M1.8 5.8 L5.2 9.2 L11.3 3" fill="none" stroke="#3a3a3a" stroke-width="1.3"/></svg><div class="t" style="left:249px;top:330.2px">Straw</div><div class="t" style="left:562px;top:330.2px">Grain Type Forage</div><div class="t" style="left:653px;top:330.2px;width:44px;text-align:right">$150.00</div><div class="t" style="left:704px;top:330.2px;width:34px;text-align:center">92.00</div><div class="t" style="left:738px;top:330.2px;width:57px;text-align:center">0.62</div><div class="t" style="left:795px;top:330.2px;width:65px;text-align:center">459.25</div><div class="t" style="left:861px;top:330.2px;width:65px;text-align:center">389.53</div><div class="t" style="left:925px;top:330.2px;width:71px;text-align:center">24.25</div><div class="t" style="left:996px;top:330.2px;width:68px;text-align:center">15.07</div><div class="t" style="left:1064px;top:330.2px;width:81px;text-align:center">30.40</div><div class="t" style="left:1145px;top:330.2px;width:49px;text-align:center">2.01</div><div class="t" style="left:1194px;top:330.2px;width:48px;text-align:center">3.00</div><div class="t" style="left:1242px;top:330.2px;width:45px;text-align:right">$166.98</div><div class="t" style="left:1294px;top:330.2px;width:44px;text-align:right">$163.04</div><div class="t" style="left:1345px;top:330.2px;width:44px;text-align:right">$3.94</div><div style="position:absolute;left:1397px;top:327px;width:45px;height:18px;background:#e0ede0"></div><div class="t" style="left:1396px;top:330.2px;width:35px;text-align:right;color:#333">102</div><div style="position:absolute;left:225px;top:346px;width:1217px;height:22px;background:#eef5fc"></div><div style="position:absolute;left:225px;top:367px;width:1217px;height:1px;background:#dadada"></div><svg style="position:absolute;left:226.3px;top:350.2px" width="14" height="14"><rect x="0.75" y="0.75" width="12" height="12" fill="#fff" stroke="#3a3a3a" stroke-width="1.3"/><path d="M1.8 5.8 L5.2 9.2 L11.3 3" fill="none" stroke="#3a3a3a" stroke-width="1.3"/></svg><div class="t" style="left:249px;top:350.7px">Bakery By Prod Cereal</div><div class="t" style="left:562px;top:350.7px">Energy</div><div class="t" style="left:653px;top:350.7px;width:44px;text-align:right">$200.00</div><div class="t" style="left:704px;top:350.7px;width:34px;text-align:center">88.50</div><div class="t" style="left:738px;top:350.7px;width:57px;text-align:center">1.33</div><div class="t" style="left:795px;top:350.7px;width:65px;text-align:center">603.07</div><div class="t" style="left:858px;top:350.7px;width:65px;text-align:center">33.80</div><div class="t" style="left:925px;top:350.7px;width:71px;text-align:center">466.56</div><div class="t" style="left:996px;top:350.7px;width:68px;text-align:center">100.92</div><div class="t" style="left:1064px;top:350.7px;width:81px;text-align:center">1.79</div><div class="t" style="left:1145px;top:350.7px;width:49px;text-align:center">13.48</div><div class="t" style="left:1194px;top:350.7px;width:48px;text-align:center">55.00</div><div class="t" style="left:1242px;top:350.7px;width:45px;text-align:right">$238.04</div><div class="t" style="left:1294px;top:350.7px;width:44px;text-align:right">$225.99</div><div class="t" style="left:1345px;top:350.7px;width:44px;text-align:right">$12.05</div><div style="position:absolute;left:1397px;top:346px;width:45px;height:21px;background:#cde6cd"></div><div class="t" style="left:1396px;top:350.7px;width:35px;text-align:right;color:#333">105</div><div style="position:absolute;left:225px;top:368px;width:1217px;height:23px;background:#ffffff"></div><div style="position:absolute;left:225px;top:390px;width:1217px;height:1px;background:#dadada"></div><svg style="position:absolute;left:226.3px;top:372.7px" width="14" height="14"><rect x="0.75" y="0.75" width="12" height="12" fill="#fff" stroke="#3a3a3a" stroke-width="1.3"/><path d="M1.8 5.8 L5.2 9.2 L11.3 3" fill="none" stroke="#3a3a3a" stroke-width="1.3"/></svg><div class="t" style="left:249px;top:373.2px">Corn meal</div><div class="t" style="left:562px;top:373.2px">Energy</div><div class="t" style="left:653px;top:373.2px;width:44px;text-align:right">$181.40</div><div class="t" style="left:704px;top:373.2px;width:34px;text-align:center">88.00</div><div class="t" style="left:738px;top:373.2px;width:57px;text-align:center">1.23</div><div class="t" style="left:795px;top:373.2px;width:65px;text-align:center">474.12</div><div class="t" style="left:858px;top:373.2px;width:65px;text-align:center">27.71</div><div class="t" style="left:925px;top:373.2px;width:71px;text-align:center">434.04</div><div class="t" style="left:996px;top:373.2px;width:68px;text-align:center">12.22</div><div class="t" style="left:1064px;top:373.2px;width:81px;text-align:center">0.15</div><div class="t" style="left:1145px;top:373.2px;width:49px;text-align:center">1.63</div><div class="t" style="left:1194px;top:373.2px;width:48px;text-align:center">74.76</div><div class="t" style="left:1242px;top:373.2px;width:45px;text-align:right">$242.88</div><div class="t" style="left:1294px;top:373.2px;width:44px;text-align:right">$206.14</div><div class="t" style="left:1345px;top:373.2px;width:44px;text-align:right">$36.75</div><div style="position:absolute;left:1397px;top:368px;width:45px;height:22px;background:#66cf66"></div><div class="t" style="left:1396px;top:373.2px;width:35px;text-align:right;color:#1f4a1f">118</div><div style="position:absolute;left:225px;top:391px;width:1217px;height:22px;background:#eef5fc"></div><div style="position:absolute;left:225px;top:412px;width:1217px;height:1px;background:#dadada"></div><svg style="position:absolute;left:226.3px;top:395.2px" width="14" height="14"><rect x="0.75" y="0.75" width="12" height="12" fill="#fff" stroke="#3a3a3a" stroke-width="1.3"/><path d="M1.8 5.8 L5.2 9.2 L11.3 3" fill="none" stroke="#3a3a3a" stroke-width="1.3"/></svg><div class="t" style="left:249px;top:395.7px">Oat Silage 13 CP 60 NDF 16 LNDF</div><div class="t" style="left:562px;top:395.7px">Grain Type Forage</div><div class="t" style="left:653px;top:395.7px;width:44px;text-align:right">$40.00</div><div class="t" style="left:704px;top:395.7px;width:34px;text-align:center">32.37</div><div class="t" style="left:738px;top:395.7px;width:57px;text-align:center">0.86</div><div class="t" style="left:795px;top:395.7px;width:65px;text-align:center">456.12</div><div class="t" style="left:858px;top:395.7px;width:65px;text-align:center">354.89</div><div class="t" style="left:925px;top:395.7px;width:71px;text-align:center">17.45</div><div class="t" style="left:996px;top:395.7px;width:68px;text-align:center">23.22</div><div class="t" style="left:1064px;top:395.7px;width:81px;text-align:center">60.56</div><div class="t" style="left:1145px;top:395.7px;width:49px;text-align:center">3.88</div><div class="t" style="left:1194px;top:395.7px;width:48px;text-align:center">2.10</div><div class="t" style="left:1242px;top:395.7px;width:45px;text-align:right">$146.31</div><div class="t" style="left:1294px;top:395.7px;width:44px;text-align:right">$123.57</div><div class="t" style="left:1345px;top:395.7px;width:44px;text-align:right">$22.74</div><div style="position:absolute;left:1397px;top:391px;width:45px;height:21px;background:#66cf66"></div><div class="t" style="left:1396px;top:395.7px;width:35px;text-align:right;color:#1f4a1f">118</div><div style="position:absolute;left:225px;top:413px;width:1217px;height:22px;background:#ffffff"></div><div style="position:absolute;left:225px;top:434px;width:1217px;height:1px;background:#dadada"></div><svg style="position:absolute;left:226.3px;top:417.2px" width="14" height="14"><rect x="0.75" y="0.75" width="12" height="12" fill="#fff" stroke="#3a3a3a" stroke-width="1.3"/><path d="M1.8 5.8 L5.2 9.2 L11.3 3" fill="none" stroke="#3a3a3a" stroke-width="1.3"/></svg><div class="t" style="left:249px;top:417.7px">Bakery Blend</div><div class="t" style="left:562px;top:417.7px">Energy</div><div class="t" style="left:653px;top:417.7px;width:44px;text-align:right">$155.00</div><div class="t" style="left:704px;top:417.7px;width:34px;text-align:center">91.90</div><div class="t" style="left:738px;top:417.7px;width:57px;text-align:center">1.22</div><div class="t" style="left:795px;top:417.7px;width:65px;text-align:center">517.24</div><div class="t" style="left:858px;top:417.7px;width:65px;text-align:center">52.86</div><div class="t" style="left:925px;top:417.7px;width:71px;text-align:center">375.34</div><div class="t" style="left:996px;top:417.7px;width:68px;text-align:center">83.12</div><div class="t" style="left:1064px;top:417.7px;width:81px;text-align:center">5.92</div><div class="t" style="left:1145px;top:417.7px;width:49px;text-align:center">11.10</div><div class="t" style="left:1194px;top:417.7px;width:48px;text-align:center">44.25</div><div class="t" style="left:1242px;top:417.7px;width:45px;text-align:right">$207.92</div><div class="t" style="left:1294px;top:417.7px;width:44px;text-align:right">$168.66</div><div class="t" style="left:1345px;top:417.7px;width:44px;text-align:right">$39.25</div><div style="position:absolute;left:1397px;top:413px;width:45px;height:21px;background:#38c838"></div><div class="t" style="left:1396px;top:417.7px;width:35px;text-align:right;color:#143814">123</div><div style="position:absolute;left:225px;top:435px;width:1217px;height:23px;background:#eef5fc"></div><div style="position:absolute;left:225px;top:457px;width:1217px;height:1px;background:#dadada"></div><svg style="position:absolute;left:226.3px;top:439.7px" width="14" height="14"><rect x="0.75" y="0.75" width="12" height="12" fill="#fff" stroke="#3a3a3a" stroke-width="1.3"/><path d="M1.8 5.8 L5.2 9.2 L11.3 3" fill="none" stroke="#3a3a3a" stroke-width="1.3"/></svg><div class="t" style="left:249px;top:440.2px">HMEC</div><div class="t" style="left:562px;top:440.2px">Energy</div><div class="t" style="left:653px;top:440.2px;width:44px;text-align:right">$100.00</div><div class="t" style="left:704px;top:440.2px;width:34px;text-align:center">72.00</div><div class="t" style="left:738px;top:440.2px;width:57px;text-align:center">1.26</div><div class="t" style="left:795px;top:440.2px;width:65px;text-align:center">617.17</div><div class="t" style="left:858px;top:440.2px;width:65px;text-align:center">123.37</div><div class="t" style="left:925px;top:440.2px;width:71px;text-align:center">469.81</div><div class="t" style="left:996px;top:440.2px;width:68px;text-align:center">10.92</div><div class="t" style="left:1064px;top:440.2px;width:81px;text-align:center">13.07</div><div class="t" style="left:1145px;top:440.2px;width:49px;text-align:center">1.82</div><div class="t" style="left:1194px;top:440.2px;width:48px;text-align:center">58.18</div><div class="t" style="left:1242px;top:440.2px;width:45px;text-align:right">$173.50</div><div class="t" style="left:1294px;top:440.2px;width:44px;text-align:right">$138.89</div><div class="t" style="left:1345px;top:440.2px;width:44px;text-align:right">$34.61</div><div style="position:absolute;left:1397px;top:435px;width:45px;height:22px;background:#2ec42e"></div><div class="t" style="left:1396px;top:440.2px;width:35px;text-align:right;color:#103010">125</div><div style="position:absolute;left:225px;top:458px;width:1217px;height:22px;background:#ffffff"></div><div style="position:absolute;left:225px;top:479px;width:1217px;height:1px;background:#dadada"></div><svg style="position:absolute;left:226.3px;top:462.2px" width="14" height="14"><rect x="0.75" y="0.75" width="12" height="12" fill="#fff" stroke="#3a3a3a" stroke-width="1.3"/></svg><div class="t" style="left:249px;top:462.7px">Alfalfa Hay 20 CP 40 NDF 17 LNDF</div><div class="t" style="left:562px;top:462.7px">Hay Crop Forage</div><div class="t" style="left:653px;top:462.7px;width:44px;text-align:right">$113.38</div><div class="t" style="left:704px;top:462.7px;width:34px;text-align:center">90.00</div><div class="t" style="left:738px;top:462.7px;width:57px;text-align:center">0.91</div><div class="t" style="left:795px;top:462.7px;width:65px;text-align:center">437.39</div><div class="t" style="left:858px;top:462.7px;width:65px;text-align:center">190.64</div><div class="t" style="left:925px;top:462.7px;width:71px;text-align:center">13.00</div><div class="t" style="left:996px;top:462.7px;width:68px;text-align:center">67.09</div><div class="t" style="left:1064px;top:462.7px;width:81px;text-align:center">166.66</div><div class="t" style="left:1145px;top:462.7px;width:49px;text-align:center">8.96</div><div class="t" style="left:1194px;top:462.7px;width:48px;text-align:center">1.61</div><div style="position:absolute;left:225px;top:480px;width:1217px;height:22px;background:#eef5fc"></div><div style="position:absolute;left:225px;top:501px;width:1217px;height:1px;background:#dadada"></div><svg style="position:absolute;left:226.3px;top:484.2px" width="14" height="14"><rect x="0.75" y="0.75" width="12" height="12" fill="#fff" stroke="#3a3a3a" stroke-width="1.3"/></svg><div class="t" style="left:249px;top:484.7px">Alfalfa silage</div><div class="t" style="left:562px;top:484.7px">Hay Crop Forage</div><div class="t" style="left:653px;top:484.7px;width:44px;text-align:right">$55.00</div><div class="t" style="left:704px;top:484.7px;width:34px;text-align:center">34.40</div><div class="t" style="left:738px;top:484.7px;width:57px;text-align:center">0.76</div><div class="t" style="left:795px;top:484.7px;width:65px;text-align:center">237.58</div><div class="t" style="left:858px;top:484.7px;width:65px;text-align:center">150.72</div><div class="t" style="left:925px;top:484.7px;width:71px;text-align:center">13.73</div><div class="t" style="left:996px;top:484.7px;width:68px;text-align:center">8.38</div><div class="t" style="left:1064px;top:484.7px;width:81px;text-align:center">64.76</div><div class="t" style="left:1145px;top:484.7px;width:49px;text-align:center">1.40</div><div class="t" style="left:1194px;top:484.7px;width:48px;text-align:center">1.70</div><div style="position:absolute;left:225px;top:502px;width:1217px;height:22px;background:#ffffff"></div><div style="position:absolute;left:225px;top:523px;width:1217px;height:1px;background:#dadada"></div><svg style="position:absolute;left:226.3px;top:506.2px" width="14" height="14"><rect x="0.75" y="0.75" width="12" height="12" fill="#fff" stroke="#3a3a3a" stroke-width="1.3"/></svg><div class="t" style="left:249px;top:506.7px">Alfalfa Silage</div><div class="t" style="left:562px;top:506.7px">Hay Crop Forage</div><div class="t" style="left:653px;top:506.7px;width:44px;text-align:right">$0.00</div><div class="t" style="left:704px;top:506.7px;width:34px;text-align:center">30.50</div><div class="t" style="left:738px;top:506.7px;width:57px;text-align:center">0.91</div><div class="t" style="left:795px;top:506.7px;width:65px;text-align:center">328.19</div><div class="t" style="left:858px;top:506.7px;width:65px;text-align:center">151.73</div><div class="t" style="left:925px;top:506.7px;width:71px;text-align:center">27.45</div><div class="t" style="left:996px;top:506.7px;width:68px;text-align:center">8.98</div><div class="t" style="left:1064px;top:506.7px;width:81px;text-align:center">140.03</div><div class="t" style="left:1145px;top:506.7px;width:49px;text-align:center">1.50</div><div class="t" style="left:1194px;top:506.7px;width:48px;text-align:center">3.40</div><div style="position:absolute;left:225px;top:524px;width:1217px;height:23px;background:#eef5fc"></div><div style="position:absolute;left:225px;top:546px;width:1217px;height:1px;background:#dadada"></div><svg style="position:absolute;left:226.3px;top:528.7px" width="14" height="14"><rect x="0.75" y="0.75" width="12" height="12" fill="#fff" stroke="#3a3a3a" stroke-width="1.3"/></svg><div class="t" style="left:249px;top:529.2px">Alfalfa silage calc</div><div class="t" style="left:562px;top:529.2px">Hay Crop Forage</div><div class="t" style="left:653px;top:529.2px;width:44px;text-align:right">$55.00</div><div class="t" style="left:704px;top:529.2px;width:34px;text-align:center">39.96</div><div class="t" style="left:738px;top:529.2px;width:57px;text-align:center">0.80</div><div class="t" style="left:795px;top:529.2px;width:65px;text-align:center">265.36</div><div class="t" style="left:858px;top:529.2px;width:65px;text-align:center">138.27</div><div class="t" style="left:925px;top:529.2px;width:71px;text-align:center">7.99</div><div class="t" style="left:996px;top:529.2px;width:68px;text-align:center">17.95</div><div class="t" style="left:1064px;top:529.2px;width:81px;text-align:center">101.15</div><div class="t" style="left:1145px;top:529.2px;width:49px;text-align:center">3.00</div><div class="t" style="left:1194px;top:529.2px;width:48px;text-align:center">0.99</div><div style="position:absolute;left:225px;top:547px;width:1217px;height:22px;background:#ffffff"></div><div style="position:absolute;left:225px;top:568px;width:1217px;height:1px;background:#dadada"></div><svg style="position:absolute;left:226.3px;top:551.2px" width="14" height="14"><rect x="0.75" y="0.75" width="12" height="12" fill="#fff" stroke="#3a3a3a" stroke-width="1.3"/></svg><div class="t" style="left:249px;top:551.7px">Alfalfa silage sample 1</div><div class="t" style="left:562px;top:551.7px">Hay Crop Forage</div><div class="t" style="left:653px;top:551.7px;width:44px;text-align:right">$55.00</div><div class="t" style="left:704px;top:551.7px;width:34px;text-align:center">44.00</div><div class="t" style="left:738px;top:551.7px;width:57px;text-align:center">0.79</div><div class="t" style="left:795px;top:551.7px;width:65px;text-align:center">259.01</div><div class="t" style="left:858px;top:551.7px;width:65px;text-align:center">126.04</div><div class="t" style="left:925px;top:551.7px;width:71px;text-align:center">4.84</div><div class="t" style="left:996px;top:551.7px;width:68px;text-align:center">19.15</div><div class="t" style="left:1064px;top:551.7px;width:81px;text-align:center">108.98</div><div class="t" style="left:1145px;top:551.7px;width:49px;text-align:center">3.20</div><div class="t" style="left:1194px;top:551.7px;width:48px;text-align:center">0.60</div><div style="position:absolute;left:225px;top:569px;width:1217px;height:23px;background:#eef5fc"></div><div style="position:absolute;left:225px;top:591px;width:1217px;height:1px;background:#dadada"></div><svg style="position:absolute;left:226.3px;top:573.7px" width="14" height="14"><rect x="0.75" y="0.75" width="12" height="12" fill="#fff" stroke="#3a3a3a" stroke-width="1.3"/></svg><div class="t" style="left:249px;top:574.2px">Alfalfa silage sample 2</div><div class="t" style="left:562px;top:574.2px">Hay Crop Forage</div><div class="t" style="left:653px;top:574.2px;width:44px;text-align:right">$55.00</div><div class="t" style="left:704px;top:574.2px;width:34px;text-align:center">45.00</div><div class="t" style="left:738px;top:574.2px;width:57px;text-align:center">0.79</div><div class="t" style="left:795px;top:574.2px;width:65px;text-align:center">327.11</div><div class="t" style="left:858px;top:574.2px;width:65px;text-align:center">150.44</div><div class="t" style="left:925px;top:574.2px;width:71px;text-align:center">10.79</div><div class="t" style="left:996px;top:574.2px;width:68px;text-align:center">8.08</div><div class="t" style="left:1064px;top:574.2px;width:81px;text-align:center">84.57</div><div class="t" style="left:1145px;top:574.2px;width:49px;text-align:center">1.40</div><div class="t" style="left:1194px;top:574.2px;width:48px;text-align:center">1.70</div><div style="position:absolute;left:242px;top:131px;width:1px;height:449px;background:#dadada"></div><div style="position:absolute;left:555px;top:131px;width:1px;height:449px;background:#dadada"></div><div style="position:absolute;left:653px;top:131px;width:1px;height:449px;background:#dadada"></div><div style="position:absolute;left:704px;top:131px;width:1px;height:449px;background:#dadada"></div><div style="position:absolute;left:738px;top:131px;width:1px;height:449px;background:#dadada"></div><div style="position:absolute;left:795px;top:131px;width:1px;height:449px;background:#dadada"></div><div style="position:absolute;left:860px;top:131px;width:1px;height:449px;background:#dadada"></div><div style="position:absolute;left:925px;top:131px;width:1px;height:449px;background:#dadada"></div><div style="position:absolute;left:996px;top:131px;width:1px;height:449px;background:#dadada"></div><div style="position:absolute;left:1064px;top:131px;width:1px;height:449px;background:#dadada"></div><div style="position:absolute;left:1145px;top:131px;width:1px;height:449px;background:#dadada"></div><div style="position:absolute;left:1194px;top:131px;width:1px;height:449px;background:#dadada"></div><div style="position:absolute;left:1242px;top:131px;width:1px;height:449px;background:#dadada"></div><div style="position:absolute;left:1294px;top:131px;width:1px;height:449px;background:#dadada"></div><div style="position:absolute;left:1345px;top:131px;width:1px;height:449px;background:#dadada"></div><div style="position:absolute;left:1396px;top:131px;width:1px;height:449px;background:#dadada"></div><div style="position:absolute;left:1442px;top:131px;width:1px;height:449px;background:#dadada"></div><div style="position:absolute;left:555px;top:131px;width:99px;height:23px;box-sizing:border-box;border:2px solid #000"></div><div style="position:absolute;left:225px;top:579px;width:1238px;height:6px;background:#f0f0f0"></div><div style="position:absolute;left:223px;top:579px;width:2px;height:1px;background:#6f6f6f"></div><div style="position:absolute;left:1443px;top:36px;width:20px;height:543px;background:#fff"></div><div style="position:absolute;left:1447px;top:36px;width:16px;height:543px;background:#f0f0f0"></div><div style="position:absolute;left:1448px;top:37px;width:14px;height:5px;box-sizing:border-box;border:1px solid #c8c8c8;background:#f4f4f4"></div><svg style="position:absolute;left:1450.5px;top:47.5px" width="9" height="6"><path d="M1 5 L4.5 1 L8 5" fill="none" stroke="#505050" stroke-width="1.6"/></svg><div style="position:absolute;left:1448px;top:58px;width:14px;height:297px;background:#c8c8c8"></div><svg style="position:absolute;left:1450.5px;top:567px" width="9" height="6"><path d="M1 1 L4.5 5 L8 1" fill="none" stroke="#505050" stroke-width="1.6"/></svg>
<div style="position:absolute;left:223px;top:585px;width:322px;height:20px;box-sizing:border-box;border:1px solid #5a5a5a;border-right:none;background:#b0c4de"><div class="t" style="left:0;top:2px;width:322px;text-align:center;color:#1a2a2a">Feed Counts</div></div><div style="position:absolute;left:545px;top:585px;width:397px;height:20px;box-sizing:border-box;border:1px solid #5a5a5a;border-right:none;background:#20b2aa"><div class="t" style="left:0;top:2px;width:397px;text-align:center;color:#1a2a2a">Feed Details</div></div><div style="position:absolute;left:942px;top:585px;width:522px;height:20px;box-sizing:border-box;border:1px solid #5a5a5a;border-right:none;background:#add8e6"><div class="t" style="left:0;top:2px;width:522px;text-align:center;color:#1a2a2a">Feed Pricing Analysis Statistics</div></div><div style="position:absolute;left:1463px;top:585px;width:1px;height:20px;background:#5a5a5a"></div><div class="t" style="left:181px;top:612px;width:150px;text-align:right">Farm Feeds</div><div style="position:absolute;left:336px;top:609px;width:46px;height:19px;box-sizing:border-box;border:1px solid #cfcfcf;background:#f0f0f0"><div class="t" style="left:0;top:1.5px;width:44px;text-align:center;color:#6d6d6d;box-sizing:border-box">122</div></div><div class="t" style="left:181px;top:635px;width:150px;text-align:right">Unselected</div><div style="position:absolute;left:336px;top:632px;width:46px;height:18px;box-sizing:border-box;border:1px solid #cfcfcf;background:#f0f0f0"><div class="t" style="left:0;top:1.0px;width:44px;text-align:center;color:#6d6d6d;box-sizing:border-box">19</div></div><div class="t" style="left:341px;top:612px;width:150px;text-align:right">By Type</div><div style="position:absolute;left:497px;top:609px;width:46px;height:19px;box-sizing:border-box;border:1px solid #cfcfcf;background:#f0f0f0"><div class="t" style="left:0;top:1.5px;width:44px;text-align:center;color:#6d6d6d;box-sizing:border-box">34</div></div><div class="t" style="left:342px;top:635px;width:150px;text-align:right">To Analyze</div><div style="position:absolute;left:497px;top:632px;width:46px;height:18px;box-sizing:border-box;border:1px solid #cfcfcf;background:#f0f0f0"><div class="t" style="left:0;top:1.0px;width:44px;text-align:center;color:#6d6d6d;box-sizing:border-box">15</div></div><div style="position:absolute;left:336px;top:656px;width:96px;height:20px;box-sizing:border-box;border:1px solid #adadad;background:#e1e1e1"><div class="t" style="left:0;top:2px;width:94px;text-align:center">Select All Feeds</div></div><div class="t" style="left:515px;top:612px;width:150px;text-align:right">Last Updated</div><div style="position:absolute;left:671px;top:609px;width:269px;height:19px;box-sizing:border-box;border:1px solid #cfcfcf;background:#f0f0f0"><div class="t" style="left:0;top:1.5px;width:267px;text-align:left;color:#6d6d6d;padding-left:3px;box-sizing:border-box">11/30/2018</div></div><div class="t" style="left:515px;top:648px;width:150px;text-align:right">Notes</div><div style="position:absolute;left:671px;top:631px;width:269px;height:50px;box-sizing:border-box;border:1px solid #cfcfcf;background:#f0f0f0"><svg style="position:absolute;left:253px;top:8px" width="10" height="6"><path d="M1 5 L5.0 1 L9 5" fill="none" stroke="#a8a8a8" stroke-width="1.2"/></svg><svg style="position:absolute;left:253px;top:30px" width="10" height="6"><path d="M1 1 L5.0 5 L9 1" fill="none" stroke="#a8a8a8" stroke-width="1.2"/></svg><div style="position:absolute;left:249px;top:0;width:1px;height:50px;background:#e4e4e4"></div></div><div class="t" style="left:911px;top:612px;width:150px;text-align:right">R Squared</div><div style="position:absolute;left:1067px;top:609px;width:95px;height:19px;box-sizing:border-box;border:1px solid #cfcfcf;background:#f0f0f0"><div class="t" style="left:0;top:1.5px;width:93px;text-align:left;color:#6d6d6d;padding-left:3px;box-sizing:border-box">0.971</div></div><div class="t" style="left:912px;top:635px;width:150px;text-align:right">Intercept</div><div style="position:absolute;left:1067px;top:631px;width:95px;height:19px;box-sizing:border-box;border:1px solid #cfcfcf;background:#f0f0f0"><div class="t" style="left:0;top:1.5px;width:93px;text-align:left;color:#6d6d6d;padding-left:3px;box-sizing:border-box">119.6</div></div><div class="t" style="left:911px;top:659px;width:150px;text-align:right">Observations</div><div style="position:absolute;left:1067px;top:654px;width:95px;height:19px;box-sizing:border-box;border:1px solid #cfcfcf;background:#f0f0f0"><div class="t" style="left:0;top:1.5px;width:93px;text-align:left;color:#6d6d6d;padding-left:3px;box-sizing:border-box">15</div></div><div class="t" style="left:1083px;top:630.5px;width:150px;text-align:right">Slopes</div><div class="t" style="left:1083px;top:640.5px;width:150px;text-align:right">($ per Unit)</div><div style="position:absolute;left:1240px;top:609px;width:224px;height:80px;box-sizing:border-box;border:1px solid #828790;border-bottom:none;background:#fff;overflow:hidden"><div class="t" style="left:3px;top:1.70px;color:#000">ME = -16.12</div><div class="t" style="left:3px;top:14.45px;color:#000">Ferm CHO = -982873</div><div class="t" style="left:3px;top:27.20px;color:#000">Ferm Fiber = 982873</div><div class="t" style="left:3px;top:39.95px;color:#000">Ferm Starch = 982872</div><div class="t" style="left:3px;top:52.70px;color:#000">Ferm Sugar = 982874</div><div style="position:absolute;left:206px;top:0;width:15px;height:70px;background:#f0f0f0"></div><svg style="position:absolute;left:209px;top:7px" width="10" height="6"><path d="M1 5 L5.0 1 L9 5" fill="none" stroke="#505050" stroke-width="1.6"/></svg><div style="position:absolute;left:206px;top:18px;width:14px;height:16px;background:#c8c8c8"></div><svg style="position:absolute;left:209px;top:51px" width="10" height="6"><path d="M1 1 L5.0 5 L9 1" fill="none" stroke="#505050" stroke-width="1.6"/></svg></div><div style="position:absolute;left:0px;top:672px;width:1475px;height:18px;background:#f0f0f0"></div><div style="position:absolute;left:24px;top:673px;width:1414px;height:14px;background:#cdcdcd"></div><svg style="position:absolute;left:4px;top:676px" width="7" height="10"><path d="M5.5 1 L1.5 5 L5.5 9" fill="none" stroke="#505050" stroke-width="1.6"/></svg><svg style="position:absolute;left:1457px;top:676px" width="7" height="10"><path d="M1.5 1 L5.5 5 L1.5 9" fill="none" stroke="#505050" stroke-width="1.6"/></svg>
</body></html>
